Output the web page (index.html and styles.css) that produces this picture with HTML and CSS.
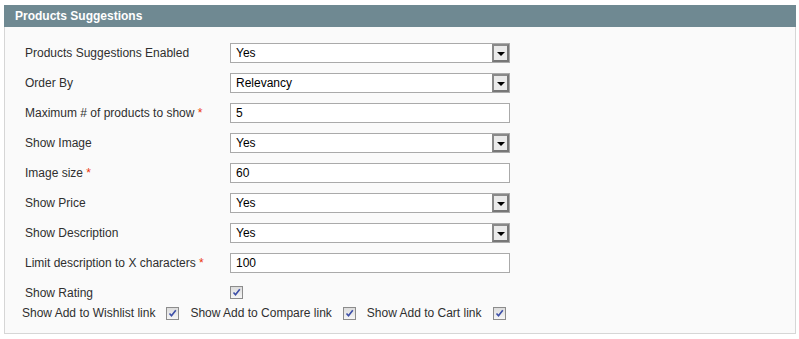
FILE: index.html
```html
<!DOCTYPE html>
<html>
<head>
<meta charset="utf-8">
<link rel="stylesheet" href="styles.css">
</head>
<body>
<div class="section">
  <div class="section-head">Products Suggestions</div>
  <div class="section-body">
    <div class="row"><label class="lbl">Products Suggestions Enabled</label><div class="select"><span>Yes</span><i class="btn"><b></b></i></div></div>
    <div class="row"><label class="lbl">Order By</label><div class="select"><span>Relevancy</span><i class="btn"><b></b></i></div></div>
    <div class="row"><label class="lbl">Maximum # of products to show <em>*</em></label><div class="input">5</div></div>
    <div class="row"><label class="lbl">Show Image</label><div class="select"><span>Yes</span><i class="btn"><b></b></i></div></div>
    <div class="row"><label class="lbl">Image size <em>*</em></label><div class="input">60</div></div>
    <div class="row"><label class="lbl">Show Price</label><div class="select"><span>Yes</span><i class="btn"><b></b></i></div></div>
    <div class="row"><label class="lbl">Show Description</label><div class="select"><span>Yes</span><i class="btn"><b></b></i></div></div>
    <div class="row"><label class="lbl">Limit description to X characters <em>*</em></label><div class="input">100</div></div>
    <div class="row row-check"><label class="lbl">Show Rating</label><span class="cb"><svg viewBox="0 0 9 9" width="9" height="9"><path d="M1.5 4.5 L3.5 6.8 L7.8 1.2" fill="none" stroke="#3d4fa8" stroke-width="1.6"/></svg></span></div>
    <div class="links">
      <span class="link-lbl">Show Add to Wishlist link</span><span class="cb"><svg viewBox="0 0 9 9" width="9" height="9"><path d="M1.5 4.5 L3.5 6.8 L7.8 1.2" fill="none" stroke="#3d4fa8" stroke-width="1.6"/></svg></span>
      <span class="link-lbl">Show Add to Compare link</span><span class="cb"><svg viewBox="0 0 9 9" width="9" height="9"><path d="M1.5 4.5 L3.5 6.8 L7.8 1.2" fill="none" stroke="#3d4fa8" stroke-width="1.6"/></svg></span>
      <span class="link-lbl">Show Add to Cart link</span><span class="cb"><svg viewBox="0 0 9 9" width="9" height="9"><path d="M1.5 4.5 L3.5 6.8 L7.8 1.2" fill="none" stroke="#3d4fa8" stroke-width="1.6"/></svg></span>
    </div>
  </div>
</div>
</body>
</html>
```
FILE: styles.css
```css
html, body {
  margin: 0;
  padding: 0;
  background: #ffffff;
}
body {
  font-family: "Liberation Sans", Arial, sans-serif;
  font-size: 12px;
  color: #2f2f2f;
}
.section {
  margin: 5px 0 0 4px;
  width: 792px;
}
.section-head {
  height: 22px;
  line-height: 22px;
  background: #6f8992;
  color: #ffffff;
  font-weight: bold;
  padding-left: 11px;
}
.section-body {
  background: #fafafa;
  border: 1px solid #d6d6d6;
  border-top: 0;
  height: 307px;
  box-sizing: border-box;
  padding-top: 16px;
}
.row {
  display: flex;
  align-items: center;
  height: 20px;
  margin-bottom: 10px;
  padding-left: 20px;
}
.lbl {
  width: 205px;
  flex: none;
}
.lbl em {
  font-style: normal;
  color: #eb340a;
}
.select, .input {
  width: 280px;
  height: 20px;
  box-sizing: border-box;
  border: 1px solid #aaaaaa;
  background: #ffffff;
  color: #000000;
  display: flex;
  align-items: center;
  padding-left: 5px;
}
.select span {
  flex: 1;
}
.btn {
  width: 17px;
  height: 18px;
  box-sizing: border-box;
  border: 2px solid #8a8a8a;
  border-right-color: #777;
  border-bottom-color: #777;
  background: #ebebeb;
  display: flex;
  align-items: center;
  justify-content: center;
}
.btn b {
  width: 0;
  height: 0;
  border-left: 4px solid transparent;
  border-right: 4px solid transparent;
  border-top: 4px solid #000;
  margin-top: 1px;
}
.row-check {
  margin-top: 12px;
  margin-bottom: 4px;
  height: 15px;
}
.cb {
  width: 13px;
  height: 13px;
  box-sizing: border-box;
  border: 1px solid #8c8c8c;
  background: linear-gradient(#dcdcdc, #f6f6f6);
  display: inline-flex;
  align-items: center;
  justify-content: center;
  flex: none;
}
.links {
  display: flex;
  align-items: center;
  padding-left: 17px;
  height: 18px;
}
.link-lbl {
  margin-right: 11px;
}
.links .cb {
  margin-right: 11px;
}
```
